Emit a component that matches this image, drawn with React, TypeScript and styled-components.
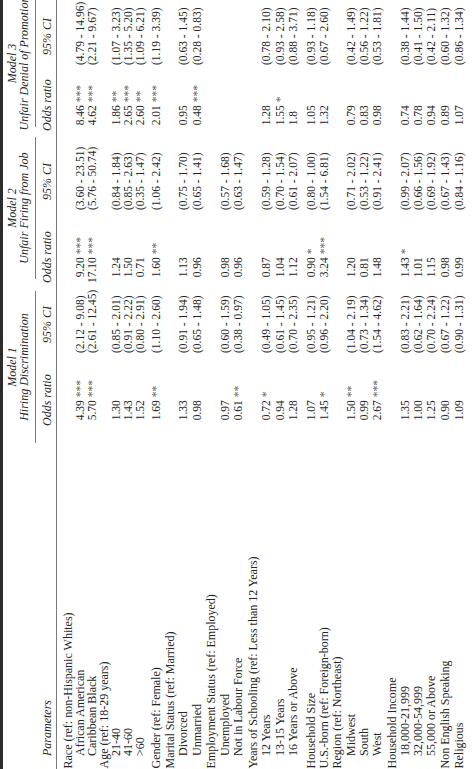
import React from 'react';
import styled, { createGlobalStyle } from 'styled-components';

const Global = createGlobalStyle`
  html, body { margin: 0; padding: 0; background: #fff; }
  body { width: 474px; height: 769px; overflow: hidden; }
`;

const COLS = '343px 73px 70px 73px 79px 66px 65px';
const HEAD_COLS = '326px 152px 12px 142px 10px 127px';

const Viewport = styled.div`
  width: 474px;
  height: 769px;
  overflow: hidden;
  background: #fff;
`;

const Page = styled.div`
  width: 769px;
  height: 474px;
  transform-origin: 0 0;
  transform: translateY(769px) rotate(-90deg);
  font-family: "Liberation Serif", "Times New Roman", serif;
  font-size: 12px;
  color: #262626;
  display: flex;
  flex-direction: column;
  background: #fff;
`;

const TopBar = styled.div`
  height: 3px;
  flex: none;
  background: #2c2c2c;
`;

const HeadBlock = styled.div`
  display: grid;
  grid-template-columns: ${HEAD_COLS};
  padding-top: 3px;
`;

const GroupHead = styled.div<{ $col: number }>`
  grid-column: ${(p) => p.$col};
  display: flex;
  flex-direction: column;
  align-items: center;
  font-style: italic;
  line-height: 12px;
  white-space: nowrap;
  padding-bottom: 4.5px;
  border-bottom: 1px solid #7a7a7a;
`;

const ColHeadRow = styled.div`
  display: grid;
  grid-template-columns: ${COLS};
  padding: 5.5px 0 2.5px;
  border-bottom: 1px solid #7a7a7a;
  line-height: 12px;
  font-style: italic;
  white-space: nowrap;
`;

const ColHead = styled.div<{ $pad?: number }>`
  padding-left: ${(p) => p.$pad || 0}px;
`;

const Body = styled.div`
  padding-top: 5.5px;
  display: flex;
  flex-direction: column;
`;

const RowLine = styled.div<{ $gap: number }>`
  display: grid;
  grid-template-columns: ${COLS};
  height: 12px;
  line-height: 12px;
  margin-top: ${(p) => p.$gap}px;
  white-space: nowrap;
`;

const Label = styled.div<{ $sub?: boolean }>`
  padding-left: ${(p) => (p.$sub ? 13 : 0.5)}px;
`;

const OddsCell = styled.div`
  display: flex;
  font-size: 11.5px;
`;

const IntPart = styled.span`
  display: inline-block;
  width: 11.5px;
  text-align: right;
`;

const Stars = styled.span`
  margin-left: 3px;
  color: #5a5a5a;
`;

const CiCell = styled.div`
  font-size: 11.5px;
`;

type Row = { label: string; c: number; sub?: boolean; v?: string[] };

const ROWS: Row[] = [
  { c: 68, label: 'Race (ref: non-Hispanic Whites)' },
  { c: 80, label: 'African American', sub: true, v: ['4.39 ***', '(2.12 - 9.08)', '9.20 ***', '(3.60 - 23.51)', '8.46 ***', '(4.79 - 14.96)'] },
  { c: 92, label: 'Caribbean Black', sub: true, v: ['5.70 ***', '(2.61 - 12.45)', '17.10 ***', '(5.76 - 50.74)', '4.62 ***', '(2.21 - 9.67)'] },
  { c: 104, label: 'Age (ref: 18-29 years)' },
  { c: 116, label: '21-40', sub: true, v: ['1.30', '(0.85 - 2.01)', '1.24', '(0.84 - 1.84)', '1.86 **', '(1.07 - 3.23)'] },
  { c: 128, label: '41-60', sub: true, v: ['1.43', '(0.91 - 2.22)', '1.50', '(0.85 - 2.63)', '2.65 ***', '(1.35 - 5.20)'] },
  { c: 140, label: '>60', sub: true, v: ['1.52', '(0.80 - 2.91)', '0.71', '(0.35 - 1.47)', '2.60 **', '(1.09 - 6.21)'] },
  { c: 155.5, label: 'Gender (ref: Female)', v: ['1.69 **', '(1.10 - 2.60)', '1.60 **', '(1.06 - 2.42)', '2.01 ***', '(1.19 - 3.39)'] },
  { c: 169.5, label: 'Marital Status (ref: Married)' },
  { c: 183, label: 'Divorced', sub: true, v: ['1.33', '(0.91 - 1.94)', '1.13', '(0.75 - 1.70)', '0.95', '(0.63 - 1.45)'] },
  { c: 196.5, label: 'Unmarried', sub: true, v: ['0.98', '(0.65 - 1.48)', '0.96', '(0.65 - 1.41)', '0.48 ***', '(0.28 - 0.83)'] },
  { c: 211, label: 'Employment Status (ref: Employed)' },
  { c: 224.5, label: 'Unemployed', sub: true, v: ['0.97', '(0.60 - 1.59)', '0.98', '(0.57 - 1.68)', '', ''] },
  { c: 238, label: 'Not in Labour Force', sub: true, v: ['0.61 **', '(0.38 - 0.97)', '0.96', '(0.63 - 1.47)', '', ''] },
  { c: 252.5, label: 'Years of Schooling (ref: Less than 12 Years)' },
  { c: 266, label: '12 Years', sub: true, v: ['0.72 *', '(0.49 - 1.05)', '0.87', '(0.59 - 1.28)', '1.28', '(0.78 - 2.10)'] },
  { c: 279.5, label: '13-15 Years', sub: true, v: ['0.94', '(0.61 - 1.45)', '1.04', '(0.70 - 1.54)', '1.55 *', '(0.93 - 2.58)'] },
  { c: 293, label: '16 Years or Above', sub: true, v: ['1.28', '(0.70 - 2.35)', '1.12', '(0.61 - 2.07)', '1.8', '(0.88 - 3.71)'] },
  { c: 311, label: 'Household Size', v: ['1.07', '(0.95 - 1.21)', '0.90 *', '(0.80 - 1.00)', '1.05', '(0.93 - 1.18)'] },
  { c: 324, label: 'U.S.-born (ref: Foreign-born)', v: ['1.45 *', '(0.96 - 2.20)', '3.24 ***', '(1.54 - 6.81)', '1.32', '(0.67 - 2.60)'] },
  { c: 337, label: 'Region (ref: Northeast)' },
  { c: 350.5, label: 'Midwest', sub: true, v: ['1.50 **', '(1.04 - 2.19)', '1.20', '(0.71 - 2.02)', '0.79', '(0.42 - 1.49)'] },
  { c: 363.5, label: 'South', sub: true, v: ['0.99', '(0.73 - 1.34)', '0.81', '(0.53 - 1.22)', '0.83', '(0.56 - 1.22)'] },
  { c: 376.5, label: 'West', sub: true, v: ['2.67 ***', '(1.54 - 4.62)', '1.48', '(0.91 - 2.41)', '0.98', '(0.53 - 1.81)'] },
  { c: 392, label: 'Household Income' },
  { c: 405, label: '18,000-21,999', sub: true, v: ['1.35', '(0.83 - 2.21)', '1.43 *', '(0.99 - 2.07)', '0.74', '(0.38 - 1.44)'] },
  { c: 418, label: '32,000-54,999', sub: true, v: ['1.00', '(0.62 - 1.64)', '1.01', '(0.66 - 1.56)', '0.78', '(0.41 - 1.50)'] },
  { c: 431, label: '55,000 or Above', sub: true, v: ['1.25', '(0.70 - 2.24)', '1.15', '(0.69 - 1.92)', '0.94', '(0.42 - 2.11)'] },
  { c: 445, label: 'Non English Speaking', v: ['0.90', '(0.67 - 1.22)', '0.98', '(0.67 - 1.43)', '0.89', '(0.60 - 1.32)'] },
  { c: 459, label: 'Religious', v: ['1.09', '(0.90 - 1.31)', '0.99', '(0.84 - 1.16)', '1.07', '(0.86 - 1.34)'] },
];

const MODELS = [
  { title: 'Model 1', sub: 'Hiring Discrimination' },
  { title: 'Model 2', sub: 'Unfair Firing from Job' },
  { title: 'Model 3', sub: 'Unfair Denial of Promotion' },
];

function Odds({ text }: { text: string }) {
  if (!text) return <OddsCell />;
  const [num, stars] = text.split(' ');
  const [int, frac] = num.split('.');
  return (
    <OddsCell>
      <IntPart>{int}</IntPart>
      <span>{frac !== undefined ? '.' + frac : ''}</span>
      {stars && <Stars>{stars}</Stars>}
    </OddsCell>
  );
}

export default function App() {
  return (
    <>
      <Global />
      <Viewport>
        <Page>
          <TopBar />
          <HeadBlock>
            {MODELS.map((m, i) => (
              <GroupHead key={m.title} $col={2 + i * 2}>
                <span>{m.title}</span>
                <span>{m.sub}</span>
              </GroupHead>
            ))}
          </HeadBlock>
          <ColHeadRow>
            <ColHead $pad={13}>Parameters</ColHead>
            {MODELS.map((m) => (
              <React.Fragment key={m.title}>
                <ColHead>Odds ratio</ColHead>
                <ColHead $pad={10}>95% CI</ColHead>
              </React.Fragment>
            ))}
          </ColHeadRow>
          <Body>
            {ROWS.map((r, idx) => {
              const gap = idx === 0 ? 0 : r.c - ROWS[idx - 1].c - 12;
              return (
                <RowLine key={r.label} $gap={gap}>
                  <Label $sub={r.sub}>{r.label}</Label>
                  {r.v &&
                    r.v.map((val, i) =>
                      i % 2 === 0 ? <Odds key={i} text={val} /> : <CiCell key={i}>{val}</CiCell>
                    )}
                </RowLine>
              );
            })}
          </Body>
        </Page>
      </Viewport>
    </>
  );
}
